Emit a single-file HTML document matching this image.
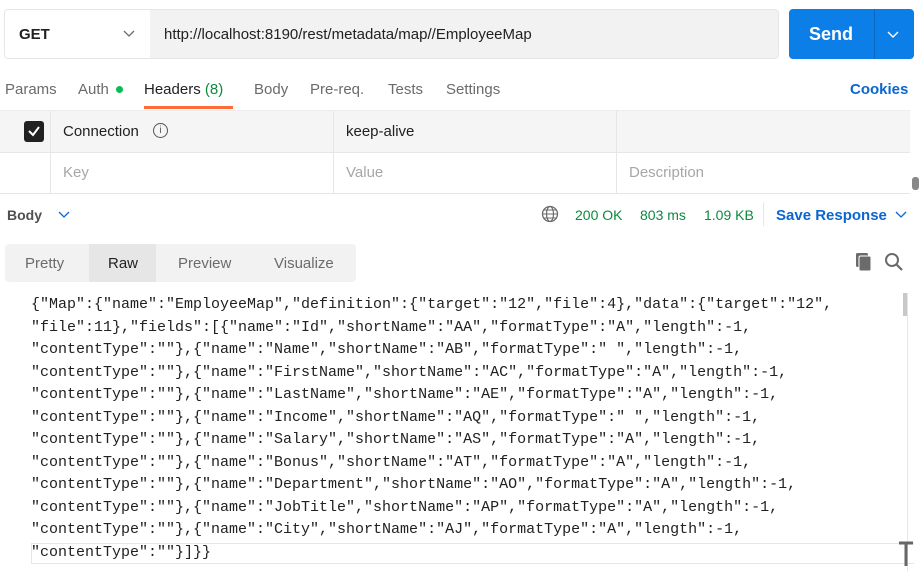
<!DOCTYPE html>
<html><head><style>
*{box-sizing:border-box;margin:0;padding:0}
body{width:924px;height:571px;background:#fff;font-family:"Liberation Sans",sans-serif;position:relative;overflow:hidden;color:#212121}
.a{position:absolute}
.code{font-family:"Liberation Mono",monospace;font-size:15px;color:#212121;white-space:pre;line-height:22.5px}
</style></head><body>
<div class="a" style="left:4px;top:9px;width:775px;height:50px;border:1px solid #e6e6e6;border-radius:4px;background:#f2f2f2"></div>
<div class="a" style="left:5px;top:10px;width:145px;height:48px;background:#fff;border-radius:3px 0 0 3px"></div>
<div class="a" style="left:19px;top:26px;font-size:15px;font-weight:bold;color:#212121">GET</div>
<svg class="a" style="left:123px;top:30px" width="12" height="8"><path d="M1 1L6 6L11 1" stroke="#6b6b6b" stroke-width="1.3" fill="none"/></svg>
<div class="a" style="left:164px;top:26px;font-size:15px;color:#212121">http://localhost:8190/rest/metadata/map//EmployeeMap</div>
<div class="a" style="left:789px;top:9px;width:125px;height:50px;background:#0c7ee8;border-radius:4px"></div>
<div class="a" style="left:874px;top:9px;width:1px;height:50px;background:#0a66c0"></div>
<div class="a" style="left:809px;top:24px;font-size:18px;font-weight:bold;color:#fff">Send</div>
<svg class="a" style="left:887px;top:31px" width="12" height="8"><path d="M1 1L6 6L11 1" stroke="#fff" stroke-width="1.4" fill="none"/></svg>
<div class="a" style="left:5px;top:81px;font-size:15px;color:#6b6b6b">Params</div>
<div class="a" style="left:78px;top:81px;font-size:15px;color:#6b6b6b">Auth</div>
<div class="a" style="left:116px;top:86px;width:7px;height:7px;border-radius:50%;background:#0cbb52"></div>
<div class="a" style="left:144px;top:81px;font-size:15px;color:#212121">Headers <span style="color:#0b8a3e">(8)</span></div>
<div class="a" style="left:144px;top:106px;width:89px;height:3px;background:#ff6c37"></div>
<div class="a" style="left:254px;top:81px;font-size:15px;color:#6b6b6b">Body</div>
<div class="a" style="left:310px;top:81px;font-size:15px;color:#6b6b6b">Pre-req.</div>
<div class="a" style="left:388px;top:81px;font-size:15px;color:#6b6b6b">Tests</div>
<div class="a" style="left:446px;top:81px;font-size:15px;color:#6b6b6b">Settings</div>
<div class="a" style="left:850px;top:81px;font-size:15px;font-weight:bold;color:#0b66d0">Cookies</div>
<div class="a" style="left:0;top:110px;width:910px;height:1px;background:#ededed"></div>
<div class="a" style="left:0;top:111px;width:910px;height:41px;background:#f5f5f5"></div>
<div class="a" style="left:0;top:152px;width:910px;height:1px;background:#e6e6e6"></div>
<div class="a" style="left:0;top:193px;width:910px;height:1px;background:#e6e6e6"></div>
<div class="a" style="left:50px;top:111px;width:1px;height:82px;background:#e6e6e6"></div>
<div class="a" style="left:333px;top:111px;width:1px;height:82px;background:#e6e6e6"></div>
<div class="a" style="left:616px;top:111px;width:1px;height:82px;background:#e6e6e6"></div>
<div class="a" style="left:24px;top:121px;width:20px;height:21px;background:#212121;border-radius:3px"></div>
<svg class="a" style="left:27px;top:124px" width="14" height="14"><path d="M2 7L6 11L12 3" stroke="#fff" stroke-width="2" fill="none"/></svg>
<div class="a" style="left:63px;top:123px;font-size:15px">Connection</div>
<div class="a" style="left:153px;top:123px;width:15px;height:15px;border:1.2px solid #555;border-radius:50%;font-size:10px;text-align:center;line-height:13px;color:#555">i</div>
<div class="a" style="left:346px;top:123px;font-size:15px">keep-alive</div>
<div class="a" style="left:63px;top:164px;font-size:15px;color:#a6a6a6">Key</div>
<div class="a" style="left:346px;top:164px;font-size:15px;color:#a6a6a6">Value</div>
<div class="a" style="left:629px;top:164px;font-size:15px;color:#a6a6a6">Description</div>
<div class="a" style="left:912px;top:177px;width:7px;height:13px;background:#888;border-radius:3px"></div>
<div class="a" style="left:7px;top:207px;font-size:14px;font-weight:bold;color:#505050">Body</div>
<svg class="a" style="left:58px;top:211px" width="12" height="8"><path d="M1 1L6 6L11 1" stroke="#0b66d0" stroke-width="1.3" fill="none"/></svg>
<svg class="a" style="left:541px;top:205px" width="18" height="18"><circle cx="9" cy="9" r="7.5" stroke="#6b6b6b" stroke-width="1.3" fill="none"/><ellipse cx="9" cy="9" rx="3.5" ry="7.5" stroke="#6b6b6b" stroke-width="1.2" fill="none"/><path d="M1.5 9H16.5M3 5H15M3 13H15" stroke="#6b6b6b" stroke-width="1.1"/></svg>
<div class="a" style="left:575px;top:207px;font-size:14px;color:#0b8a3e">200 OK</div>
<div class="a" style="left:640px;top:207px;font-size:14px;color:#0b8a3e">803 ms</div>
<div class="a" style="left:704px;top:207px;font-size:14px;color:#0b8a3e">1.09 KB</div>
<div class="a" style="left:763px;top:202px;width:1px;height:24px;background:#e6e6e6"></div>
<div class="a" style="left:776px;top:207px;font-size:15px;font-weight:bold;color:#0b66d0">Save Response</div>
<svg class="a" style="left:895px;top:211px" width="12" height="8"><path d="M1 1L6 6L11 1" stroke="#0b66d0" stroke-width="1.3" fill="none"/></svg>
<div class="a" style="left:5px;top:244px;width:351px;height:38px;background:#f2f2f2;border-radius:4px"></div>
<div class="a" style="left:89px;top:244px;width:67px;height:38px;background:#e6e6e6"></div>
<div class="a" style="left:25px;top:255px;font-size:15px;color:#6b6b6b">Pretty</div>
<div class="a" style="left:108px;top:255px;font-size:15px;color:#212121">Raw</div>
<div class="a" style="left:178px;top:255px;font-size:15px;color:#6b6b6b">Preview</div>
<div class="a" style="left:274px;top:255px;font-size:15px;color:#6b6b6b">Visualize</div>
<svg class="a" style="left:854px;top:252px" width="20" height="20"><rect x="2" y="1" width="12" height="14" rx="1.5" fill="#6b6b6b"/><rect x="5" y="4" width="12" height="15" rx="1.5" fill="#6b6b6b" stroke="#fff" stroke-width="1"/></svg>
<svg class="a" style="left:884px;top:252px" width="20" height="20"><circle cx="8" cy="8" r="6" stroke="#6b6b6b" stroke-width="2" fill="none"/><path d="M12.5 12.5L18 18" stroke="#6b6b6b" stroke-width="2.2"/></svg>
<div class="a" style="left:903px;top:293px;width:5px;height:23px;background:#c8c8c8"></div>
<div class="a" style="left:907px;top:293px;width:1px;height:278px;background:#e6e6e6"></div>
<div class="a" style="left:31px;top:543px;width:883px;height:21px;border:1px solid #e6e6e6;border-right:none"></div>
<svg class="a" style="left:898px;top:541px" width="16" height="26"><path d="M1 2H15M8 2V25" stroke="#666" stroke-width="3"/></svg>
<div class="a code" style="left:31px;top:294px">{"Map":{"name":"EmployeeMap","definition":{"target":"12","file":4},"data":{"target":"12",
"file":11},"fields":[{"name":"Id","shortName":"AA","formatType":"A","length":-1,
"contentType":""},{"name":"Name","shortName":"AB","formatType":" ","length":-1,
"contentType":""},{"name":"FirstName","shortName":"AC","formatType":"A","length":-1,
"contentType":""},{"name":"LastName","shortName":"AE","formatType":"A","length":-1,
"contentType":""},{"name":"Income","shortName":"AQ","formatType":" ","length":-1,
"contentType":""},{"name":"Salary","shortName":"AS","formatType":"A","length":-1,
"contentType":""},{"name":"Bonus","shortName":"AT","formatType":"A","length":-1,
"contentType":""},{"name":"Department","shortName":"AO","formatType":"A","length":-1,
"contentType":""},{"name":"JobTitle","shortName":"AP","formatType":"A","length":-1,
"contentType":""},{"name":"City","shortName":"AJ","formatType":"A","length":-1,
"contentType":""}]}}</div>
</body></html>
